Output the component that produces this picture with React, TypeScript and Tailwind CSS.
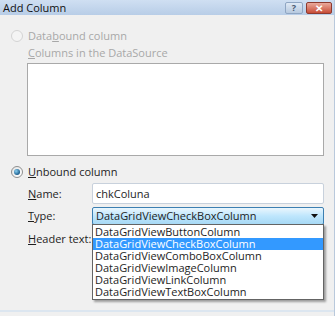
import React from 'react';

const font = { fontFamily: '"Open Sans", "Noto Sans", sans-serif' };

const Radio: React.FC<{ checked?: boolean; disabled?: boolean }> = ({ checked, disabled }) => (
  <span
    className={`w-[12px] h-[12px] rounded-full border flex items-center justify-center ${
      disabled ? 'border-[#d4d4d4] bg-[#f4f4f4]' : 'border-[#8e8f8f] bg-gradient-to-br from-[#e6e6e6] to-[#ffffff]'
    }`}
  >
    {checked && (
      <span className="w-[6px] h-[6px] rounded-full bg-[radial-gradient(circle_at_35%_35%,#8ad0f2,#1c5e8e_70%)]" />
    )}
  </span>
);

const items = [
  'DataGridViewButtonColumn',
  'DataGridViewCheckBoxColumn',
  'DataGridViewComboBoxColumn',
  'DataGridViewImageColumn',
  'DataGridViewLinkColumn',
  'DataGridViewTextBoxColumn',
];

export default function App() {
  return (
    <div
      className="w-[335px] h-[316px] bg-[#f0f0f0] text-[11px] leading-[12px] text-[#1e1e1e] overflow-hidden border-r border-[#b9c9dc] flex flex-col"
      style={font}
    >
      {/* title bar */}
      <div className="h-[15px] shrink-0 flex items-center justify-between pl-[3px] pr-[2px] bg-gradient-to-b from-[#cfdff2] to-[#b8cde7]">
        <span className="text-[11px] text-[#111]">Add Column</span>
        <div className="flex items-center gap-[3px] pt-[1px]">
          <span className="w-[18px] h-[12px] border border-[#8fa6c3] rounded-[2px] bg-gradient-to-b from-[#dfe9f5] to-[#b7c9df] flex items-center justify-center text-[9px] font-bold text-[#4a5a70]">
            ?
          </span>
          <span className="w-[26px] h-[12px] border border-[#8d3a2f] rounded-[2px] bg-gradient-to-b from-[#e9a99c] to-[#c74a35] flex items-center justify-center text-[10px] font-bold text-white">
            ✕
          </span>
        </div>
      </div>

      <div className="flex flex-col pl-[11px] pr-[10px]">
        {/* databound */}
        <div className="flex items-center gap-[5px] mt-[15px] h-[12px] text-[#a8a8a8]">
          <Radio disabled />
          <span>
            Data<span className="underline">b</span>ound column
          </span>
        </div>
        <div className="pl-[17px] mt-[5px] text-[#a8a8a8]">
          <span className="underline">C</span>olumns in the DataSource
        </div>
        <div className="ml-[16px] mt-[4px] h-[93px] border border-[#a9a9a9] bg-white" />

        {/* unbound */}
        <div className="flex items-center gap-[5px] mt-[10px] h-[12px]">
          <Radio checked />
          <span>
            <span className="underline">U</span>nbound column
          </span>
        </div>

        <div className="grid grid-cols-[64px_1fr] items-center ml-[17px] mt-[5px] gap-y-[3px] relative">
          <span>
            <span className="underline">N</span>ame:
          </span>
          <div className="h-[21px] border border-[#c8d1dc] rounded-[2px] bg-white flex items-center pl-[3px]">
            chkColuna
          </div>

          <span>
            <span className="underline">T</span>ype:
          </span>
          <div className="h-[18px] border border-[#3c7fb1] rounded-[2px] bg-gradient-to-b from-[#eaf6fd] via-[#bee6fd] to-[#a7d9f5] flex items-center justify-between pl-[3px] pr-[5px]">
            <span>DataGridViewCheckBoxColumn</span>
            <svg width="7" height="4" viewBox="0 0 7 4">
              <path d="M0 0h7L3.5 4z" fill="#111" />
            </svg>
          </div>

          <span className="mt-[5px]">
            <span className="underline">H</span>eader text:
          </span>
          <span />

          {/* dropdown list */}
          <div className="absolute left-[64px] right-0 top-[41px] bg-white border border-[#646464] shadow-[2px_2px_2px_rgba(0,0,0,0.35)] py-[1px]">
            {items.map((it, i) => (
              <div
                key={it}
                className={`h-[12px] leading-[12px] pl-[2px] ${i === 1 ? 'bg-[#3399ff] text-white' : ''}`}
              >
                {it}
              </div>
            ))}
          </div>
        </div>
      </div>

      <div className="mt-auto mb-[4px] h-[2px] bg-[#dce6f0]" />
    </div>
  );
}
